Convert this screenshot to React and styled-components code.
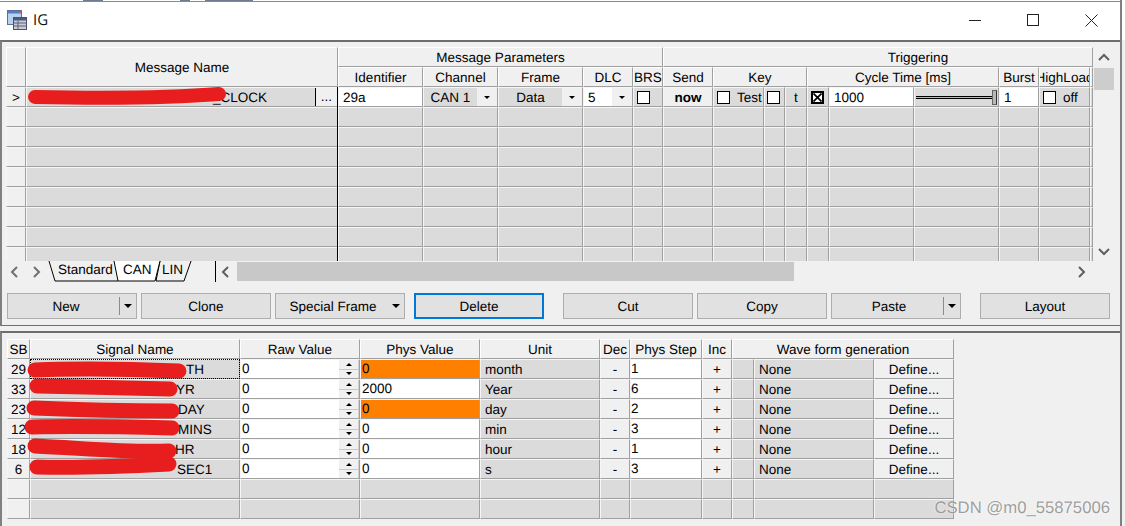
import React from 'react';
import styled, {createGlobalStyle} from 'styled-components';

const GlobalStyle = createGlobalStyle`
  html, body {
    margin: 0;
    padding: 0;
    background: #f0f0f0;
  }
  * {
    box-sizing: border-box;
  }
`;

const TONES = {
  head: '#f0f0f0',
  gray: '#dbdbdb',
  light: '#f0f0f0',
  white: '#ffffff',
  orange: '#ff8000'
};

const Page = styled.div`
  position: relative;
  width: 1125px;
  height: 526px;
  overflow: hidden;
  background: linear-gradient(#fff 40px, #f0f0f0 40px);
  font-family: "Liberation Sans", Arial, sans-serif;
  font-size: 13.5px;
  text-rendering: geometricPrecision;
  color: #000;
`;

const Frame = styled.div`
  width: 1122px;
  height: 526px;
  border-right: 2px solid #808080;
  display: flex;
  flex-direction: column;
`;

const TopStrip = styled.div`
  height: 2px;
  flex: none;
  display: flex;
  align-items: flex-start;
  background: #fff;
  border-bottom: 1px solid #8a8a8a;
`;

const StripBit = styled.span`
  height: 1px;
  width: ${p => p.$width}px;
  margin-left: ${p => p.$offset}px;
  background: #6f7c90;
`;

const TitleBar = styled.div`
  height: 38px;
  flex: none;
  display: flex;
  align-items: center;
  padding: 0 0 2px 7px;
  background: #fff;
`;

const TitleText = styled.span`
  margin-left: 6px;
  font-family: "Open Sans", "Noto Sans", sans-serif;
  font-size: 15px;
  color: #111;
`;

const WinButtons = styled.div`
  margin-left: auto;
  display: flex;
`;

const WinButton = styled.div`
  width: 58px;
  height: 36px;
  display: flex;
  align-items: center;
  justify-content: center;
`;

const TopPanel = styled.div`
  height: 286px;
  flex: none;
  border-top: 2px solid #6e6e6e;
  border-left: 2px solid #808080;
  border-bottom: 1px solid #6e6e6e;
  padding: 5px 0 0 4px;
`;

const GridRow = styled.div`
  display: flex;
  height: 214px;
`;

const Table = styled.div`
  display: grid;
  grid-template-columns: ${p => p.$cols};
  grid-auto-rows: 20px;
  height: ${p => p.$height}px;
  overflow: hidden;
`;

const Cell = styled.div`
  position: relative;
  grid-column: span ${p => p.$span || 1};
  grid-row: span ${p => p.$rows || 1};
  display: flex;
  align-items: center;
  min-width: 0;
  white-space: nowrap;
  background: ${p => TONES[p.$tone || 'gray']};
  border-top: 1px solid #f6f6f6;
  border-left: 1px solid #f6f6f6;
  border-bottom: 1px solid #a0a0a0;
  border-right: 1px solid #a0a0a0;
  padding-left: ${p => p.$pad || 0}px;
  justify-content: ${p => (p.$center ? 'center' : 'flex-start')};
  overflow: ${p => (p.$clip ? 'hidden' : 'visible')};
  outline: ${p => (p.$focus ? '1px dotted #000' : 'none')};
  outline-offset: -1px;
`;

const NameCell = styled(Cell)`
  &::after {
    content: '';
    position: absolute;
    top: -1px;
    bottom: -1px;
    right: -1px;
    width: 1px;
    background: #000;
  }
`;

const HeadCell = styled(Cell).attrs({$tone: 'head', $center: true, $clip: true})`
  border-top-color: #fff;
  border-left-color: #fff;
`;

const CellText = styled.span`
  position: relative;
  top: ${p => p.$lift || 0}px;
  left: ${p => p.$nudge || 0}px;
  font-weight: ${p => (p.$bold ? 700 : 400)};
`;

const Scribble = styled.svg`
  position: absolute;
  left: 0;
  top: 0;
  width: 100%;
  height: 100%;
  overflow: visible;
  z-index: 2;
`;

const DotButton = styled.div`
  margin-left: auto;
  width: 22px;
  height: 100%;
  background: #f0f0f0;
  border-left: 1px solid #000;
  display: flex;
  align-items: center;
  justify-content: center;
  padding-bottom: 2px;
`;

const DropPart = styled.div`
  flex: 1;
  min-width: 0;
  text-align: ${p => (p.$left ? 'left' : 'center')};
  padding-left: ${p => (p.$left ? 4 : 0)}px;
`;

const DropButton = styled.div`
  flex: none;
  width: 20px;
  height: 100%;
  background: #f0f0f0;
  display: flex;
  align-items: center;
  justify-content: center;
`;

const Caret = styled.span`
  display: block;
  width: 0;
  height: 0;
  border-left: ${p => p.$size || 3}px solid transparent;
  border-right: ${p => p.$size || 3}px solid transparent;
  ${p => (p.$up ? 'border-bottom' : 'border-top')}: ${p => p.$size || 3}px solid #000;
`;

const CheckBox = styled.span`
  flex: none;
  width: 13px;
  height: 13px;
  display: block;
  background: #fff;
  border: ${p => (p.$checked ? 2 : 1)}px solid #000;
  margin-right: ${p => p.$gap || 0}px;
`;

const SliderTrack = styled.div`
  flex: 1;
  height: 3px;
  border-top: 1px solid #000;
  border-bottom: 1px solid #000;
  background: #bbb;
`;

const SliderThumb = styled.div`
  flex: none;
  width: 5px;
  height: 15px;
  margin-right: 1px;
  background: #b8b8b8;
  border: 1px solid #666;
  border-right-color: #333;
`;

const Spinner = styled.div`
  margin-left: auto;
  flex: none;
  width: 20px;
  height: 100%;
  display: flex;
  flex-direction: column;
  background: #f0f0f0;
  border-right: 1px solid #d0d0d0;
`;

const SpinPart = styled.div`
  flex: 1;
  display: flex;
  align-items: center;
  justify-content: center;
  border-bottom: ${p => (p.$first ? '1px solid #c8c8c8' : 'none')};
`;

const VScroll = styled.div`
  width: 20px;
  margin-left: 1px;
  display: flex;
  flex-direction: column;
  align-items: stretch;
`;

const ScrollEnd = styled.div`
  height: ${p => p.$height}px;
  flex: none;
  display: flex;
  align-items: center;
  justify-content: center;
  margin-top: ${p => (p.$end ? 'auto' : 0)};
`;

const VThumb = styled.div`
  height: 22px;
  background: #cdcdcd;
`;

const TabBar = styled.div`
  height: 21px;
  width: 1086px;
  display: flex;
  align-items: stretch;
`;

const NavArrow = styled.div`
  flex: none;
  width: ${p => p.$width}px;
  display: flex;
  align-items: center;
  justify-content: ${p => (p.$end ? 'flex-end' : 'center')};
  padding-right: ${p => (p.$end ? 4 : 0)}px;
`;

const Tabs = styled.div`
  display: flex;
  margin-left: 1px;
  width: 166px;
`;

const Tab = styled.div`
  position: relative;
  flex: none;
  width: ${p => p.$width}px;
  margin-left: ${p => p.$overlap || 0}px;
  padding-left: ${p => p.$pad}px;
  line-height: 18px;
  z-index: ${p => (p.$active ? 1 : 0)};
`;

const TabShape = styled.svg`
  position: absolute;
  left: 0;
  top: 0;
  width: 100%;
  height: 100%;
  overflow: visible;
`;

const TabLabel = styled.span`
  position: relative;
`;

const TabDivider = styled.div`
  flex: none;
  width: 1px;
  background: #000;
`;

const HThumb = styled.div`
  flex: none;
  width: 557px;
  height: 19px;
  margin-top: 1px;
  background: #c8c8c8;
`;

const ButtonRow = styled.div`
  display: flex;
  gap: 4px;
  margin-top: 11px;
  padding-left: 1px;
`;

const Button = styled.div`
  position: relative;
  flex: none;
  width: 130px;
  height: 26px;
  margin-left: ${p => p.$offset || 0}px;
  padding-right: ${p => p.$shift || 0}px;
  display: flex;
  align-items: center;
  justify-content: center;
  background: #e1e1e1;
  border: ${p => (p.$focused ? '2px solid #0078d7' : '1px solid #adadad')};
`;

const SplitArrow = styled.div`
  position: absolute;
  right: 0;
  top: 3px;
  bottom: 3px;
  width: 17px;
  display: flex;
  align-items: center;
  justify-content: center;
  border-left: ${p => (p.$divider ? '1px solid #8c8c8c' : 'none')};
`;

const Splitter = styled.div`
  height: 5px;
  flex: none;
`;

const BottomPanel = styled.div`
  flex: 1;
  border-top: 2px solid #6e6e6e;
  border-left: 2px solid #808080;
  padding: 6px 0 0 5px;
`;

const Watermark = styled.div`
  position: absolute;
  right: 15px;
  top: 498px;
  font-size: 16.7px;
  line-height: 20px;
  color: rgba(128, 128, 128, 0.75);
  text-shadow: 0 0 2px #fff;
`;

const TOP_COLS = '20px 312px 85px 75px 85px 50px 30px 50px 51px 21px 22px 22px 85px 85px 40px 51px 3px';
const SIGNAL_COLS = '23px 210px 120px 120px 120px 30px 72px 30px 22px 120px 80px';
const RED = '#e81e1e';

const SIGNALS = [
  {sb: 29, name: 'TH', pad: 155, unit: 'month', phys: '0', hot: true, step: 1, path: 'M4 10 C 50 8 100 9 148 11', focus: true},
  {sb: 33, name: 'YR', pad: 145, unit: 'Year', phys: '2000', step: 6, path: 'M6 6 C 50 7 100 8 139 9'},
  {sb: 23, name: 'DAY', pad: 147, unit: 'day', phys: '0', hot: true, step: 2, path: 'M3 8 C 50 10 100 11 141 11'},
  {sb: 12, name: 'MINS', pad: 147, unit: 'min', phys: '0', step: 3, path: 'M1 7 C 50 6 100 7 141 8'},
  {sb: 18, name: 'HR', pad: 144, unit: 'hour', phys: '0', step: 1, path: 'M4 6 C 50 8 100 13 138 11'},
  {sb: 6, name: 'SEC1', pad: 146, unit: 's', phys: '0', step: 3, path: 'M6 7 C 50 8 100 6 138 4'}
];

const Chevron = ({dir, color = '#5f5f5f'}) => {
  const points = {
    left: '7,1 2,6 7,11',
    right: '3,1 8,6 3,11',
    up: '1,8 6,3 11,8',
    down: '1,4 6,9 11,4'
  };
  return (
    <svg width="12" height="12" viewBox="0 0 12 12">
      <polyline points={points[dir]} fill="none" stroke={color} strokeWidth="2" />
    </svg>
  );
};

const WindowIcon = () => (
  <svg width="20" height="20" viewBox="0 0 20 20">
    <rect x="0.5" y="0.5" width="14" height="14" fill="#b5d2f0" stroke="#5b6f99" />
    <rect x="1" y="1" width="13" height="2.5" fill="#4f7fc4" />
    <rect x="12" y="1" width="2" height="2" fill="#d9534f" />
    <rect x="6.5" y="7.5" width="13" height="12" fill="#c9ccd4" stroke="#4a5270" />
    <rect x="7" y="8" width="12" height="2.5" fill="#4d5a80" />
    <path d="M7 13h12M7 16h12M11 10.5v9" stroke="#596079" strokeWidth="1" />
  </svg>
);

const TitleIcons = () => (
  <WinButtons>
    <WinButton>
      <svg width="12" height="12" viewBox="0 0 12 12"><path d="M0 6.5h12" stroke="#222" /></svg>
    </WinButton>
    <WinButton>
      <svg width="12" height="12" viewBox="0 0 12 12"><rect x="0.5" y="0.5" width="11" height="11" fill="none" stroke="#222" /></svg>
    </WinButton>
    <WinButton>
      <svg width="13" height="13" viewBox="0 0 13 13"><path d="M0.5 0.5l12 12M12.5 0.5l-12 12" stroke="#222" /></svg>
    </WinButton>
  </WinButtons>
);

const RedMark = ({d, width = 15}) => (
  <Scribble>
    <path d={d} fill="none" stroke={RED} strokeWidth={width} strokeLinecap="round" />
  </Scribble>
);

const Check = () => <CheckBox />;

const CheckedBox = () => (
  <CheckBox $checked>
    <svg width="9" height="9" viewBox="0 0 9 9" style={{display: 'block'}}>
      <path d="M0.5 0.5l8 8M8.5 0.5l-8 8" stroke="#000" strokeWidth="1.7" />
    </svg>
  </CheckBox>
);

const DropCell = ({label, tone, left}) => (
  <Cell $tone={tone}>
    <DropPart $left={left}>{label}</DropPart>
    <DropButton><Caret /></DropButton>
  </Cell>
);

const EmptyMessageRow = () => (
  <>
    <Cell $tone="light" />
    <NameCell />
    {Array.from({length: 15}).map((_, i) => <Cell key={i} />)}
  </>
);

const MessageTable = () => (
  <Table $cols={TOP_COLS} $height={214}>
    <HeadCell $rows={2} />
    <HeadCell $rows={2}>Message Name</HeadCell>
    <HeadCell $span={5}>Message Parameters</HeadCell>
    <HeadCell $span={10}><CellText $nudge={40}>Triggering</CellText></HeadCell>
    <HeadCell>Identifier</HeadCell>
    <HeadCell>Channel</HeadCell>
    <HeadCell>Frame</HeadCell>
    <HeadCell>DLC</HeadCell>
    <HeadCell>BRS</HeadCell>
    <HeadCell>Send</HeadCell>
    <HeadCell $span={3}>Key</HeadCell>
    <HeadCell $span={3}>Cycle Time [ms]</HeadCell>
    <HeadCell>Burst</HeadCell>
    <HeadCell>HighLoad</HeadCell>
    <HeadCell />

    <Cell $tone="light" $pad={5}>&gt;</Cell>
    <NameCell $pad={186}>
      _CLOCK
      <DotButton>...</DotButton>
      <RedMark d="M8 9 C 60 10 130 11 192 6" width={14} />
    </NameCell>
    <Cell $tone="white" $pad={4}>29a</Cell>
    <DropCell label="CAN 1" />
    <DropCell label="Data" />
    <DropCell label="5" tone="white" left />
    <Cell $pad={3}><Check /></Cell>
    <Cell $tone="light" $center><CellText $bold>now</CellText></Cell>
    <Cell $pad={3} $clip><CheckBox $gap={7} />Test</Cell>
    <Cell $pad={2}><Check /></Cell>
    <Cell $center>t</Cell>
    <Cell $pad={3}><CheckedBox /></Cell>
    <Cell $tone="white" $pad={4}>1000</Cell>
    <Cell $pad={1}>
      <SliderTrack />
      <SliderThumb />
    </Cell>
    <Cell $tone="white" $pad={4}>1</Cell>
    <Cell $pad={3}><CheckBox $gap={7} />off</Cell>
    <Cell />

    {Array.from({length: 8}).map((_, i) => <EmptyMessageRow key={i} />)}
  </Table>
);

const SignalTable = () => (
  <Table $cols={SIGNAL_COLS} $height={180}>
    <HeadCell>SB</HeadCell>
    <HeadCell>Signal Name</HeadCell>
    <HeadCell>Raw Value</HeadCell>
    <HeadCell>Phys Value</HeadCell>
    <HeadCell>Unit</HeadCell>
    <HeadCell>Dec</HeadCell>
    <HeadCell>Phys Step</HeadCell>
    <HeadCell>Inc</HeadCell>
    <HeadCell $span={3}>Wave form generation</HeadCell>

    {SIGNALS.map(s => (
      <React.Fragment key={s.sb}>
        <Cell $tone="light" $center>{s.sb}</Cell>
        <Cell $pad={s.pad} $focus={s.focus}>
          {s.name}
          <RedMark d={s.path} />
        </Cell>
        <Cell $tone="white" $pad={1}>
          <CellText $lift={-1}>0</CellText>
          <Spinner>
            <SpinPart $first><Caret $up /></SpinPart>
            <SpinPart><Caret /></SpinPart>
          </Spinner>
        </Cell>
        <Cell $tone={s.hot ? 'orange' : 'white'} $pad={1}><CellText $lift={-1}>{s.phys}</CellText></Cell>
        <Cell $pad={4}>{s.unit}</Cell>
        <Cell $tone="light" $center>-</Cell>
        <Cell $tone="white"><CellText $lift={-1}>{s.step}</CellText></Cell>
        <Cell $tone="light" $center>+</Cell>
        <Cell />
        <Cell $pad={4}>None</Cell>
        <Cell $tone="light" $center>Define...</Cell>
      </React.Fragment>
    ))}

    {Array.from({length: 2}).map((_, row) => (
      <React.Fragment key={row}>
        <Cell $tone="light" />
        {Array.from({length: 10}).map((_, i) => <Cell key={i} />)}
      </React.Fragment>
    ))}
  </Table>
);

const TabStrip = () => (
  <Tabs>
    <Tab $width={69} $pad={9}>
      <TabShape viewBox="0 0 69 21">
        <polygon points="0,0 6,20 69,20 65,0" fill="#f0f0f0" />
        <polyline points="0,0 6,20 69,20" fill="none" stroke="#000" />
      </TabShape>
      <TabLabel>Standard</TabLabel>
    </Tab>
    <Tab $width={46} $pad={9} $overlap={-4} $active>
      <TabShape viewBox="0 0 46 21">
        <polygon points="0,0 4,20 41,20 46,0" fill="#fff" />
        <polyline points="0,0 4,20 41,20 46,0" fill="none" stroke="#000" />
      </TabShape>
      <TabLabel>CAN</TabLabel>
    </Tab>
    <Tab $width={35} $pad={6} $overlap={-4}>
      <TabShape viewBox="0 0 35 21">
        <polygon points="4,0 0,20 28,20 35,0" fill="#f0f0f0" />
        <polyline points="4,0 0,20 28,20 35,0" fill="none" stroke="#000" />
      </TabShape>
      <TabLabel>LIN</TabLabel>
    </Tab>
  </Tabs>
);

const ActionButton = ({label, offset, shift, focused, arrow, divider}) => (
  <Button $offset={offset} $shift={shift} $focused={focused}>
    {label}
    {arrow && <SplitArrow $divider={divider}><Caret $size={4} /></SplitArrow>}
  </Button>
);

export default function App() {
  return (
    <Page>
      <GlobalStyle />
      <Frame>
        <TopStrip>
          <StripBit $offset={83} $width={20} />
          <StripBit $offset={77} $width={10} />
          <StripBit $offset={15} $width={48} />
        </TopStrip>
        <TitleBar>
          <WindowIcon />
          <TitleText>IG</TitleText>
          <TitleIcons />
        </TitleBar>

        <TopPanel>
          <GridRow>
            <MessageTable />
            <VScroll>
              <ScrollEnd $height={21}><Chevron dir="up" /></ScrollEnd>
              <VThumb />
              <ScrollEnd $height={21} $end><Chevron dir="down" /></ScrollEnd>
            </VScroll>
          </GridRow>

          <TabBar>
            <NavArrow $width={20}><Chevron dir="left" color="#707070" /></NavArrow>
            <NavArrow $width={22}><Chevron dir="right" color="#707070" /></NavArrow>
            <TabStrip />
            <TabDivider />
            <NavArrow $width={21}><Chevron dir="left" /></NavArrow>
            <HThumb />
            <NavArrow $width={298} $end>
              <Chevron dir="right" />
            </NavArrow>
          </TabBar>

          <ButtonRow>
            <ActionButton label="New" shift={12} arrow divider />
            <ActionButton label="Clone" />
            <ActionButton label="Special Frame" shift={14} arrow />
            <ActionButton label="Delete" offset={5} focused />
            <ActionButton label="Cut" offset={15} />
            <ActionButton label="Copy" />
            <ActionButton label="Paste" shift={14} arrow divider />
            <ActionButton label="Layout" offset={15} />
          </ButtonRow>
        </TopPanel>

        <Splitter />

        <BottomPanel>
          <SignalTable />
        </BottomPanel>
      </Frame>
      <Watermark>CSDN @m0_55875006</Watermark>
    </Page>
  );
}
